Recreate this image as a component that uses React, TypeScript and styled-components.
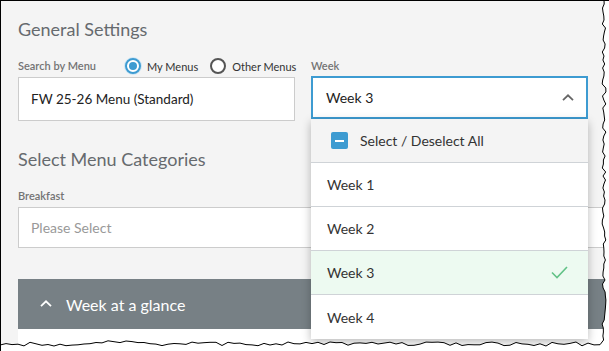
import React from 'react';
import styled, { createGlobalStyle } from 'styled-components';

const GlobalStyle = createGlobalStyle`
  html, body {
    margin: 0;
    padding: 0;
    background: #ffffff;
  }
  body {
    font-family: Lato, "Open Sans", sans-serif;
  }
  * {
    box-sizing: border-box;
  }
`;

const Frame = styled('div')`
  position: relative;
  width: 609px;
  height: 351px;
  overflow: hidden;
  background: #f4f4f4;
  border-top: 1px solid #000;
  border-left: 1px solid #000;
`;

const Content = styled('div')`
  display: flex;
  flex-direction: column;
  padding: 17px 0 0 17px;
  width: 640px;
`;

const SectionTitle = styled('h2')<{ $mt?: number }>`
  margin: ${(p) => p.$mt ?? 0}px 0 0;
  font-size: 18px;
  font-weight: 400;
  color: #666a6e;
  line-height: 22px;
  white-space: nowrap;
`;

const FieldRow = styled('div')`
  display: flex;
  gap: 16px;
  margin-top: 17px;
`;

const Field = styled('div')<{ $w: number; $mt?: number }>`
  position: relative;
  display: flex;
  flex-direction: column;
  width: ${(p) => p.$w}px;
  margin-top: ${(p) => p.$mt ?? 0}px;
`;

const LabelRow = styled('div')`
  display: flex;
  align-items: center;
  height: 18px;
  white-space: nowrap;
`;

const Label = styled('label')`
  font-size: 11px;
  font-weight: 600;
  color: #737373;
  line-height: 18px;
  margin-right: 29px;
`;

const RadioOption = styled('span')`
  display: flex;
  align-items: center;
  gap: 6px;
  margin-right: 12px;
  font-size: 11px;
  color: #333;
`;

const RadioCircle = styled('span')<{ $on?: boolean }>`
  display: inline-flex;
  align-items: center;
  justify-content: center;
  width: 16px;
  height: 16px;
  border-radius: 50%;
  border: 2px solid ${(p) => (p.$on ? '#3d9bd1' : '#555')};
  box-shadow: ${(p) => (p.$on ? '0 0 0 1px #cfe6f4' : 'none')};
  background: #fff;

  &::after {
    content: '';
    display: ${(p) => (p.$on ? 'block' : 'none')};
    width: 8px;
    height: 8px;
    border-radius: 50%;
    background: #3d9bd1;
  }
`;

const TextBox = styled('div')<{ $h: number; $muted?: boolean }>`
  display: flex;
  align-items: center;
  height: ${(p) => p.$h}px;
  margin-top: 2px;
  padding: 0 12px;
  background: #fff;
  border: 1px solid #cccccc;
  font-size: ${(p) => (p.$muted ? 14 : 13.5)}px;
  color: ${(p) => (p.$muted ? '#999' : '#222')};
`;

const SelectBox = styled('div')`
  display: flex;
  align-items: center;
  justify-content: space-between;
  height: 43px;
  margin-top: 1px;
  padding: 0 12px 0 13px;
  background: #fff;
  border: 2px solid #3d9bd1;
  font-size: 14px;
  color: #222;
`;

const Menu = styled('div')`
  position: absolute;
  top: 62px;
  left: 0;
  width: 277px;
  background: #fff;
  border-radius: 0 0 3px 3px;
  box-shadow: 0 3px 10px rgba(0, 0, 0, 0.28);
  z-index: 2;
`;

const MenuRow = styled('div')<{ $bg?: string; $last?: boolean }>`
  display: flex;
  align-items: center;
  justify-content: space-between;
  height: 44px;
  padding: 0 20px 0 16px;
  background: ${(p) => p.$bg ?? '#fff'};
  border-bottom: ${(p) => (p.$last ? 'none' : '1px solid #cfd3d7')};
  font-size: 14px;
  color: #333;
`;

const SelectAll = styled('span')`
  display: flex;
  align-items: center;
  gap: 12px;
  padding-left: 4px;
`;

const CheckSquare = styled('span')`
  display: inline-flex;
  align-items: center;
  justify-content: center;
  width: 17px;
  height: 17px;
  border-radius: 2px;
  background: #3d9bd1;

  &::after {
    content: '';
    width: 9px;
    height: 2px;
    background: #fff;
  }
`;

const Accordion = styled('div')`
  display: flex;
  flex-direction: column;
  margin-top: 31px;
`;

const AccordionHead = styled('div')`
  display: flex;
  align-items: center;
  gap: 14px;
  height: 50px;
  padding-left: 22px;
  background: #778085;
  color: #fff;
  font-size: 16px;
`;

const AccordionBody = styled('div')`
  height: 40px;
  background: #fff;
`;

const Torn = styled('svg')`
  position: absolute;
  left: -1px;
  top: -1px;
  z-index: 5;
`;

const Chevron = ({ color, w }: { color: string; w: number }) => (
  <svg width={w} height={w * 0.6} viewBox="0 0 12 7">
    <path d="M1 6 L6 1.2 L11 6" fill="none" stroke={color} strokeWidth="1.8" />
  </svg>
);

const Check = () => (
  <svg width="17" height="13" viewBox="0 0 17 13">
    <path d="M1 6.5 L6 11.5 L16 1" fill="none" stroke="#62c287" strokeWidth="1.6" />
  </svg>
);

// jagged edge of a torn screenshot
function tornPath() {
  let seed = 7;
  const rnd = () => {
    seed = (seed * 9301 + 49297) % 233280;
    return seed / 233280;
  };
  const right: string[] = [];
  for (let y = 0; y <= 340; y += 4) {
    right.push(`${(602 + rnd() * 4).toFixed(1)},${y}`);
  }
  const bottom: string[] = [];
  for (let x = 600; x >= 0; x -= 6) {
    const base = x > 90 && x < 140 ? 339 : 342;
    bottom.push(`${x},${(base + rnd() * 4).toFixed(1)}`);
  }
  return { right, bottom };
}

const TornEdge = () => {
  const { right, bottom } = tornPath();
  const line = [...right, ...bottom].join(' L ');
  const fill = `M 609,0 L ${line} L 0,351 L 609,351 Z`;
  return (
    <Torn width="609" height="351" viewBox="0 0 609 351">
      <path d={fill} fill="#fff" />
      <path d={`M ${line}`} fill="none" stroke="#000" strokeWidth="1" />
    </Torn>
  );
};

const weeks = ['Week 1', 'Week 2', 'Week 3', 'Week 4'];

export default function App() {
  return (
    <>
      <GlobalStyle />
      <Frame>
        <Content>
          <SectionTitle>General Settings</SectionTitle>
          <FieldRow>
            <Field $w={277}>
              <LabelRow>
                <Label>Search by Menu</Label>
                <RadioOption>
                  <RadioCircle $on />
                  My Menus
                </RadioOption>
                <RadioOption>
                  <RadioCircle />
                  Other Menus
                </RadioOption>
              </LabelRow>
              <TextBox $h={44}>FW 25-26 Menu (Standard)</TextBox>
            </Field>
            <Field $w={277}>
              <LabelRow>
                <Label>Week</Label>
              </LabelRow>
              <SelectBox>
                Week 3
                <Chevron color="#666" w={12} />
              </SelectBox>
              <Menu>
                <MenuRow $bg="#f4f4f4">
                  <SelectAll>
                    <CheckSquare />
                    Select / Deselect All
                  </SelectAll>
                </MenuRow>
                {weeks.map((w, i) => (
                  <MenuRow
                    key={w}
                    $bg={w === 'Week 3' ? '#edfaf1' : undefined}
                    $last={i === weeks.length - 1}
                  >
                    {w}
                    {w === 'Week 3' && <Check />}
                  </MenuRow>
                ))}
              </Menu>
            </Field>
          </FieldRow>
          <SectionTitle $mt={27}>Select Menu Categories</SectionTitle>
          <Field $w={620} $mt={17}>
            <LabelRow>
              <Label>Breakfast</Label>
            </LabelRow>
            <TextBox $h={41} $muted>
              Please Select
            </TextBox>
          </Field>
          <Accordion>
            <AccordionHead>
              <Chevron color="#fff" w={12} />
              Week at a glance
            </AccordionHead>
            <AccordionBody />
          </Accordion>
        </Content>
        <TornEdge />
      </Frame>
    </>
  );
}
